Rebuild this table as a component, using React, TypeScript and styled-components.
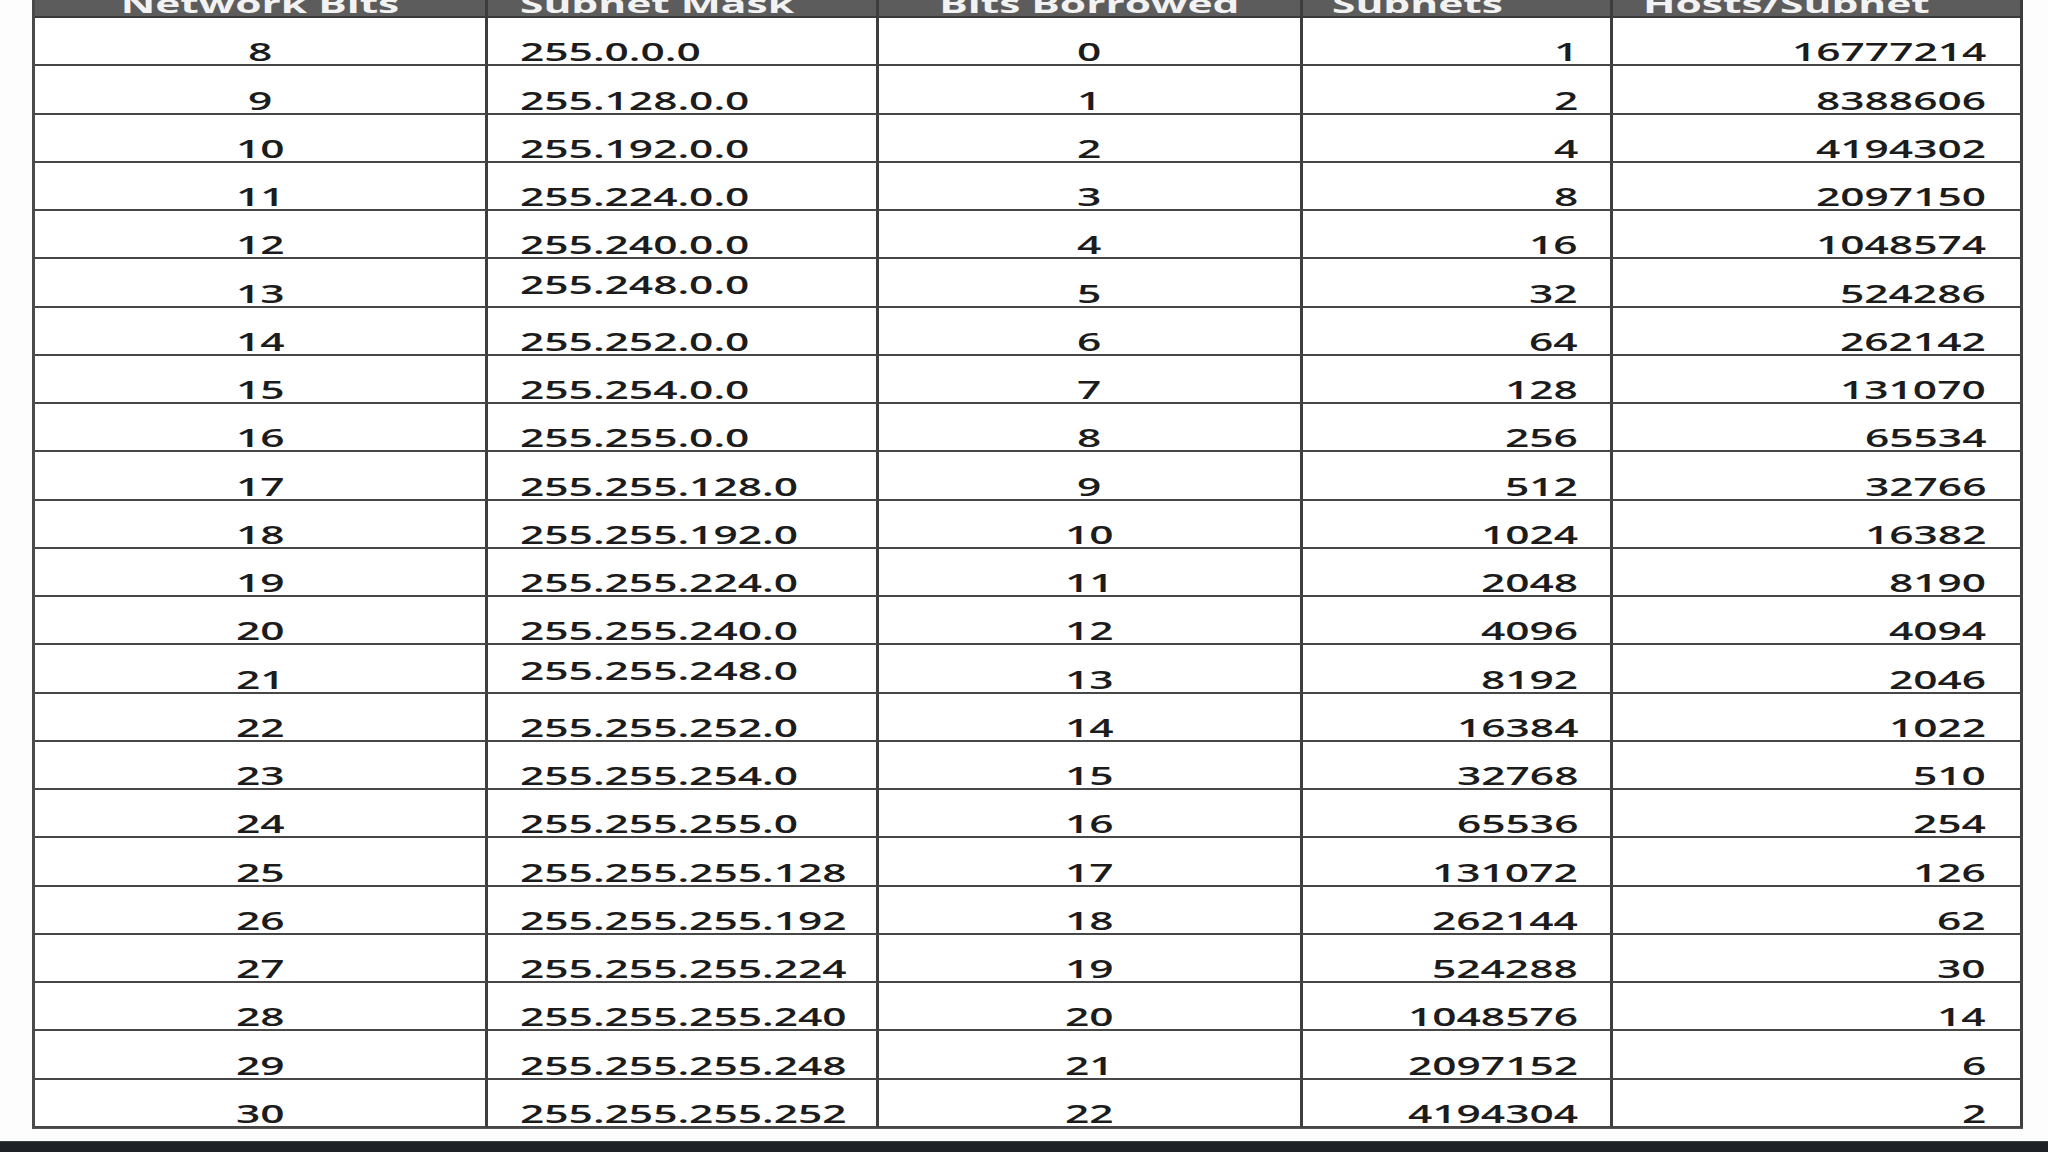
import React from "react";
import styled, { createGlobalStyle } from "styled-components";

const Global = createGlobalStyle`
  html, body { margin: 0; padding: 0; background: #ffffff; }
  body { font-family: "Open Sans", "Liberation Sans", sans-serif; }
  #root { width: 2048px; height: 1152px; overflow: hidden; }
`;

const Page = styled.div`
  width: 2048px;
  height: 1152px;
  display: flex;
  flex-direction: column;
  background: #ffffff;
`;

const Content = styled.div`
  flex: 1;
  padding-left: 32px;
  background: #fdfdfd;
`;

const BottomBar = styled.div`
  height: 10px;
  background: #1e2226;
  border-top: 1px solid #3a3f44;
`;

const Table = styled.div`
  display: grid;
  grid-template-columns: 453px 391px 424px 310px 410px;
  grid-template-rows: 18px repeat(23, 48.26px);
  width: max-content;
  border-left: 3px solid #4a4a4a;
  border-bottom: 1px solid #555;
  background: #ffffff;
`;

type Align = "left" | "center" | "right";

const HeadCell = styled.div<{ $align: Align; $pad: number }>`
  box-sizing: border-box;
  background: #5c5c5c;
  border-right: 3px solid #3c3c3c;
  border-bottom: 2px solid #3a3a3a;
  display: flex;
  align-items: flex-end;
  overflow: hidden;
  justify-content: ${(p) =>
    p.$align === "left" ? "flex-start" : p.$align === "right" ? "flex-end" : "center"};
  padding-left: ${(p) => (p.$align === "left" ? p.$pad : 0)}px;
`;

const Cell = styled.div<{ $align: Align; $pad: number; $raised?: boolean }>`
  box-sizing: border-box;
  border-right: 3px solid #3e3e3e;
  border-bottom: 2px solid #474747;
  display: flex;
  align-items: flex-end;
  justify-content: ${(p) =>
    p.$align === "left" ? "flex-start" : p.$align === "right" ? "flex-end" : "center"};
  padding-left: ${(p) => (p.$align === "left" ? p.$pad : 0)}px;
  padding-right: ${(p) => (p.$align === "right" ? p.$pad : 0)}px;
  padding-bottom: ${(p) => (p.$raised ? 9 : 0)}px;
`;

const Text = styled.span<{ $align: Align; $head?: boolean }>`
  display: inline-block;
  font-family: "Open Sans", "Liberation Sans", sans-serif;
  font-size: 25px;
  line-height: 1;
  font-weight: ${(p) => (p.$head ? 700 : 650)};
  color: ${(p) => (p.$head ? "#f2f2f2" : "#1c1c1c")};
  white-space: nowrap;
  transform: scaleX(1.7);
  transform-origin: ${(p) =>
    p.$align === "left" ? "left" : p.$align === "right" ? "right" : "center"} bottom;
`;

const heads: { label: string; align: Align; pad: number }[] = [
  { label: "Network Bits", align: "center", pad: 0 },
  { label: "Subnet Mask", align: "left", pad: 32 },
  { label: "Bits Borrowed", align: "center", pad: 0 },
  { label: "Subnets", align: "left", pad: 29 },
  { label: "Hosts/Subnet", align: "left", pad: 30 },
];

function maskFor(bits: number): string {
  const parts: number[] = [];
  for (let i = 0; i < 4; i++) {
    const b = Math.max(0, Math.min(8, bits - i * 8));
    parts.push(b === 0 ? 0 : 256 - Math.pow(2, 8 - b));
  }
  return parts.join(".");
}

const rows = Array.from({ length: 23 }, (_, i) => {
  const n = i + 8;
  return {
    bits: n,
    mask: maskFor(n),
    borrowed: n - 8,
    subnets: Math.pow(2, n - 8),
    hosts: Math.pow(2, 32 - n) - 2,
    raised: n === 13 || n === 21,
  };
});

export default function App() {
  return (
    <>
      <Global />
      <Page>
        <Content>
          <Table>
            {heads.map((h) => (
              <HeadCell key={h.label} $align={h.align} $pad={h.pad}>
                <Text $align={h.align} $head>
                  {h.label}
                </Text>
              </HeadCell>
            ))}
            {rows.map((r) => (
              <React.Fragment key={r.bits}>
                <Cell $align="center" $pad={0}>
                  <Text $align="center">{r.bits}</Text>
                </Cell>
                <Cell $align="left" $pad={32} $raised={r.raised}>
                  <Text $align="left">{r.mask}</Text>
                </Cell>
                <Cell $align="center" $pad={0}>
                  <Text $align="center">{r.borrowed}</Text>
                </Cell>
                <Cell $align="right" $pad={32}>
                  <Text $align="right">{r.subnets}</Text>
                </Cell>
                <Cell $align="right" $pad={34}>
                  <Text $align="right">{r.hosts}</Text>
                </Cell>
              </React.Fragment>
            ))}
          </Table>
        </Content>
        <BottomBar />
      </Page>
    </>
  );
}
